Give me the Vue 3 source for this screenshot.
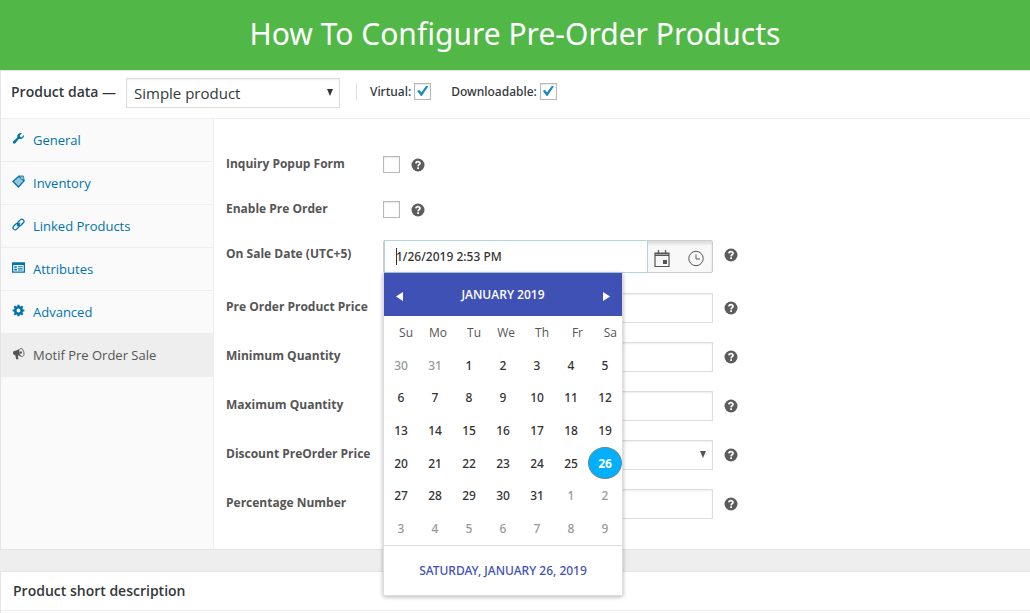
<script setup>
import { ref } from "vue"

const productType = ref("Simple product")
const isVirtual = ref(true)
const isDownloadable = ref(true)
const saleDate = ref("1/26/2019 2:53 PM")
const selectedDay = ref(26)
const activeTab = ref("motif")

const tabs = [
  { id: "general", label: "General" },
  { id: "inventory", label: "Inventory" },
  { id: "linked", label: "Linked Products" },
  { id: "attributes", label: "Attributes" },
  { id: "advanced", label: "Advanced" },
  { id: "motif", label: "Motif Pre Order Sale" }
]

const fields = [
  { id: "inquiry", label: "Inquiry Popup Form", type: "check" },
  { id: "enable", label: "Enable Pre Order", type: "check" },
  { id: "sale-date", label: "On Sale Date (UTC+5)", type: "date" },
  { id: "price", label: "Pre Order Product Price", type: "text" },
  { id: "min-qty", label: "Minimum Quantity", type: "text" },
  { id: "max-qty", label: "Maximum Quantity", type: "text" },
  { id: "discount", label: "Discount PreOrder Price", type: "select" },
  { id: "percentage", label: "Percentage Number", type: "text" }
]

const weekdays = ["Su", "Mo", "Tu", "We", "Th", "Fr", "Sa"]

// six weeks, starting on December 30
const weeks = Array.from({ length: 6 }, (_, w) =>
  Array.from({ length: 7 }, (_, d) => {
    const n = w * 7 + d - 1
    if (n < 1) return { day: n + 31, other: true }
    if (n > 31) return { day: n - 31, other: true }
    return { day: n, other: false }
  })
)

function pick(cell) {
  if (!cell.other) selectedDay.value = cell.day
}
</script>

<template>
  <div class="page">
    <header class="banner">
      <h1>How To Configure Pre-Order Products</h1>
    </header>

    <section class="panel">
      <div class="panel-head">
        <label class="panel-title" for="product-type">Product data —</label>
        <div class="select-wrap type-select">
          <select id="product-type" v-model="productType">
            <option>Simple product</option>
          </select>
          <svg class="arrow" viewBox="0 0 6 7"><path d="M0 0h6L3 7z" /></svg>
        </div>
        <div class="flags">
          <label>Virtual:<input v-model="isVirtual" type="checkbox" class="check"></label>
          <label>Downloadable:<input v-model="isDownloadable" type="checkbox" class="check"></label>
        </div>
      </div>

      <div class="panel-body">
        <nav class="tabs">
          <a
            v-for="tab in tabs"
            :key="tab.id"
            href="#"
            :class="{ active: tab.id === activeTab }"
            @click.prevent="activeTab = tab.id"
          >
            <svg v-if="tab.id === 'general'" viewBox="0 0 20 20">
              <path d="M16.7 9.3c-1.6 1.600-3.900 2-5.900 1.200L5 17.300c-.9.900-2.300.900-3.100 0-.9-.8-.9-2.200 0-3.100l6.500-5.600C7.700 6.600 8.100 4.500 9.700 3c1.500-1.500 3.600-1.900 5.500-1.200L12 5l.5 2.500L15 8l3.100-3.200c.8 1.500.1 3.200-1.400 4.500z" />
            </svg>
            <svg v-else-if="tab.id === 'inventory'" viewBox="0 0 20 20">
              <path d="M11 1h7l1 8-9 10L1 10z" opacity=".4" />
              <path d="M10.500 2 1.500 10l8.500 8.500L18.500 9z" fill="none" stroke="currentColor" stroke-width="2" />
              <path d="M10 1.500h7.500L19 9" fill="none" stroke="currentColor" stroke-width="1" />
              <circle cx="15.500" cy="4.500" r="2" fill="#fafafa" stroke="currentColor" />
            </svg>
            <svg v-else-if="tab.id === 'linked'" viewBox="0 0 20 20">
              <g fill="none" stroke="currentColor" stroke-width="2">
                <rect x="8" y="3.500" width="11" height="6.500" rx="3.200" transform="rotate(-45 13.500 6.750)" />
                <rect x="1" y="10" width="11" height="6.500" rx="3.200" transform="rotate(-45 6.500 13.250)" />
                <path d="m7.500 12.500 5-5" />
              </g>
            </svg>
            <svg v-else-if="tab.id === 'attributes'" viewBox="0 0 20 20">
              <path fill-rule="evenodd" d="M0 2h20v16H0zM2 6v10h16V6zM3.500 8h4v2.500h-4zM3.500 12h4v2.500h-4zM9 7.500h7.500V9H9zM9 10.300h7.500v1.500H9zM9 13h7.500v1.500H9z" />
            </svg>
            <svg v-else-if="tab.id === 'advanced'" viewBox="0 0 20 20">
              <circle cx="10" cy="10" r="5" fill="none" stroke="currentColor" stroke-width="4" />
              <path d="M10 1v4M10 15v4M1 10h4M15 10h4M3.600 3.600l2.900 2.900M13.500 13.500l2.900 2.900M3.600 16.400l2.900-2.900M13.500 6.500l2.900-2.900" stroke="currentColor" stroke-width="3.400" />
            </svg>
            <svg v-else viewBox="0 0 20 20">
              <path d="M11 2.500C9 5 6 5.500 3 6c-2 1-2 5 0 6l2 .5L6.500 19H10l-1-6c2 0 4 1 5.500 2.500C11 12 10 6 11 2.500z" />
              <ellipse cx="14.500" cy="8.500" rx="3.800" ry="6.500" transform="rotate(-16 14.500 8.500)" fill="none" stroke="currentColor" stroke-width="1.200" />
              <circle cx="13.500" cy="8.500" r="1.800" />
            </svg>
            <span>{{ tab.label }}</span>
          </a>
        </nav>

        <div class="form">
          <div v-for="field in fields" :key="field.id" class="row" :class="'row-' + field.type">
            <label :for="field.id">{{ field.label }}</label>

            <input v-if="field.type === 'check'" :id="field.id" type="checkbox" class="check">

            <div v-else-if="field.type === 'date'" class="date-picker">
              <input :id="field.id" v-model="saleDate" type="text">
              <button type="button" aria-label="Open the calendar">
                <svg viewBox="0 0 16 17">
                  <path d="M1 3h14v13.500H1zM1 5.500h14M4.500 0v4M11.500 0v4M1 4h14" fill="none" stroke="currentColor" stroke-width="1.200" />
                  <path d="M9 10h4v4H9z" fill="currentColor" />
                </svg>
              </button>
              <button type="button" aria-label="Open the time list">
                <svg viewBox="0 0 16 16">
                  <circle cx="8" cy="8" r="7.200" fill="none" stroke="currentColor" />
                  <path d="M8 4v4.500h4" fill="none" stroke="currentColor" />
                </svg>
              </button>

              <div class="calendar">
                <div class="calendar-head">
                  <button type="button" aria-label="Previous month">
                    <svg viewBox="0 0 7 9"><path d="M7 0v9L0 4.500z" /></svg>
                  </button>
                  <button type="button" class="month">JANUARY 2019</button>
                  <button type="button" aria-label="Next month">
                    <svg viewBox="0 0 7 9"><path d="M0 0v9l7-4.500z" /></svg>
                  </button>
                </div>
                <table>
                  <thead>
                    <tr>
                      <th v-for="name in weekdays" :key="name">{{ name }}</th>
                    </tr>
                  </thead>
                  <tbody>
                    <tr v-for="(week, w) in weeks" :key="w">
                      <td v-for="(cell, d) in week" :key="d">
                        <button
                          type="button"
                          :class="{ other: cell.other, selected: !cell.other && cell.day === selectedDay }"
                          @click="pick(cell)"
                        >
                          {{ cell.day }}
                        </button>
                      </td>
                    </tr>
                  </tbody>
                </table>
                <div class="calendar-foot">
                  <a href="#" @click.prevent="selectedDay = 26">SATURDAY, JANUARY 26, 2019</a>
                </div>
              </div>
            </div>

            <div v-else-if="field.type === 'select'" class="select-wrap control">
              <select :id="field.id">
                <option></option>
              </select>
              <svg class="arrow" viewBox="0 0 6 7"><path d="M0 0h6L3 7z" /></svg>
            </div>

            <input v-else :id="field.id" type="text" class="control">

            <svg class="help" viewBox="0 0 14 14">
              <circle cx="7" cy="7" r="6.500" fill="#5c5c5c" />
              <path d="M4.900 5.400C5 3.100 9.100 3.100 9 5.400 8.900 6.800 7.200 6.600 7.100 8.400" fill="none" stroke="#fff" stroke-width="1.700" />
              <path d="M6.200 9.300h1.800V11H6.200z" fill="#fff" />
            </svg>
          </div>
        </div>
      </div>
    </section>

    <section class="panel short-description">
      <h2>Product short description</h2>
    </section>
  </div>
</template>

<style>
body {
  margin: 0;
  background: #eee;
}
</style>

<style scoped>
.page {
  height: 100vh;
  overflow: hidden;

  font-family: "Open Sans", "Noto Sans", sans-serif;
  font-size: 13px;
  color: #32373c;
}

.page * {
  box-sizing: border-box;
}

button,
input,
select {
  margin: 0;
  font-family: inherit;
  color: inherit;
}

button {
  padding: 0;
  border: 0;
  background: none;
}

svg {
  display: block;
  flex: none;
  fill: currentColor;
}

.banner {
  display: flex;
  justify-content: center;
  align-items: center;
  height: 70px;
  padding-bottom: 4px;

  background: #51b848;
}

.banner h1 {
  margin: 0;

  color: #fff;

  font-family: "Noto Sans", sans-serif;
  font-size: 30px;
  font-weight: 400;
  white-space: nowrap;
}

.panel {
  border: 1px solid #e5e5e5;
  border-right: 0;
  background: #fff;
}

.panel-head {
  display: flex;
  align-items: center;
  height: 48px;
  padding: 0 10px 3px;

  border-bottom: 1px solid #eee;
}

.panel-title {
  width: 115px;
  padding-bottom: 4px;

  font-size: 14px;
  font-weight: 600;
  white-space: nowrap;
}

.select-wrap {
  position: relative;
}

.select-wrap select {
  width: 100%;
  height: 30px;
  padding: 0 7px;

  border: 1px solid #ddd;
  border-radius: 0;
  background: #fff;
  box-shadow: inset 0 1px 2px rgba(0,0,0,0.07);

  appearance: none;
  font-size: 15px;
}

.arrow {
  position: absolute;
  top: 11px;
  right: 7px;

  width: 6px;
  height: 7px;

  pointer-events: none;
}

.type-select {
  width: 214px;
}

.flags {
  display: flex;
  align-items: center;
  gap: 20px;
  height: 17px;
  margin: 0 0 4px 16px;
  padding-left: 13px;

  border-left: 1px solid #ddd;

  font-family: "Noto Sans", sans-serif;
  font-size: 12px;
  font-weight: 500;
}

.flags label {
  display: flex;
  align-items: center;
  gap: 3px;
}

.check {
  position: relative;
  flex: none;
  width: 17px;
  height: 17px;

  border: 1px solid #b4b9be;
  background: #fff;
  box-shadow: inset 0 1px 2px rgba(0,0,0,0.1);

  appearance: none;
}

.check:checked::before {
  content: "";
  position: absolute;
  inset: 2px;

  background: #1e8cbe;
  clip-path: polygon(0 50%, 18% 38%, 38% 62%, 84% 0, 100% 8%, 42% 96%, 34% 96%);
}

.panel-body {
  display: flex;
  min-height: 430px;
}

.tabs {
  flex: none;
  width: 213px;

  border-right: 1px solid #eee;
  background: #fafafa;
}

.tabs a {
  display: flex;
  align-items: center;
  gap: 8px;
  height: 43px;
  padding-left: 11px;

  border-bottom: 1px solid #eee;

  color: #0073aa;

  text-decoration: none;
}

.tabs svg {
  width: 13px;
  height: 13px;
  margin-bottom: 4px;
}

.tabs .active {
  background: #eee;
  color: #555;
}

.form {
  flex: 1;
  padding: 23px 12px 0;
}

.row {
  display: flex;
  align-items: center;
  height: 49px;

  color: #555;
}

.row-check {
  height: 45px;
}

.row-date {
  height: 51px;
  padding-bottom: 2px;
}

.row > label {
  flex: none;
  width: 157px;
  padding-bottom: 3px;

  font-size: 12px;
  font-weight: 700;
  white-space: nowrap;
}

.row-date > label {
  padding-bottom: 7px;
}

.control {
  width: 330px;
  height: 30px;
}

input.control {
  padding: 0 8px;

  border: 1px solid #ddd;
  background: #fff;
  box-shadow: inset 0 1px 2px rgba(0,0,0,0.07);
}

.help {
  width: 14px;
  height: 14px;
  margin-left: 11px;
}

.row-date .help {
  margin-bottom: 4px;
}

.date-picker {
  position: relative;
  display: flex;
  align-items: center;
  width: 330px;
  height: 33px;

  border: 1px solid #ccc;
  border-radius: 2px;
  background: #f8f8f8;
  box-shadow: inset 0 3px 3px #ddd;
}

.date-picker > input {
  flex: 1;
  min-width: 0;
  height: 33px;
  padding: 0 11px;

  border: 1px solid #b3d4e3;
  /* the text caret before the first character */
  background:
    linear-gradient(#333, #333) 11px center / 1px 17px no-repeat,
    #fff;

  color: #333;

  font-family: "Noto Sans", sans-serif;
  font-size: 12px;
  font-weight: 500;
}

.date-picker > button {
  display: flex;
  justify-content: center;
  width: 32px;
  padding: 3px 4px 0 0;
}

.date-picker > button:nth-of-type(2) {
  padding-right: 0;
}

.date-picker > button svg {
  width: 16px;
  height: 17px;
}

.calendar {
  position: absolute;
  top: 32px;
  left: -1px;
  z-index: 10;

  width: 240px;

  border: 1px solid #ddd;
  border-top: 0;
  border-radius: 0 0 2px 2px;
  background: #fff;
  box-shadow: 0 1px 4px rgba(0,0,0,0.3);
}

.calendar-head {
  display: flex;
  align-items: center;
  justify-content: space-between;
  height: 43px;
  padding: 0 12px;

  background: #3f51b5;
  color: #fff;
}

.calendar-head svg {
  width: 7px;
  height: 9px;
  margin-top: 4px;
}

.calendar-head .month {
  font-size: 12px;
  font-weight: 600;
}

.calendar table {
  width: 100%;
  height: 229px;

  border-collapse: collapse;
  table-layout: fixed;
}

.calendar th {
  height: 33px;
  padding: 0 5px 0 0;

  font-size: 12px;
  font-weight: 400;
  text-align: right;
}

.calendar td {
  padding: 0;
}

.calendar td button {
  display: block;
  width: 34px;
  height: 32px;

  border-radius: 50%;

  color: #333;

  font-family: "Noto Sans", sans-serif;
  font-size: 12px;
  font-weight: 500;
}

.calendar td .other {
  color: #999;
}

.calendar td .selected {
  border: 1px solid #5c8aa0;
  background: #00b0ff;
  color: #fff;

  font-weight: 700;
}

.calendar-foot {
  display: flex;
  justify-content: center;
  align-items: center;
  height: 50px;

  border-top: 1px solid #ddd;
}

.calendar-foot a {
  color: #3f51b5;

  font-family: "Noto Sans", sans-serif;
  font-size: 12px;
  font-weight: 500;
  text-decoration: none;
}

.short-description {
  margin-top: 21px;
  min-height: 60px;
}

.short-description h2 {
  margin: 0;
  padding: 9px 12px;

  border-bottom: 1px solid #eee;

  font-size: 14px;
  font-weight: 600;
  line-height: 20px;
}
</style>
